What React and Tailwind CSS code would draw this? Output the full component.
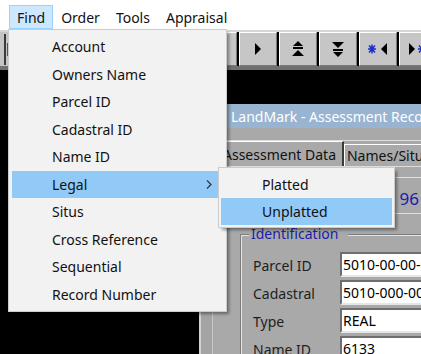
import React from "react"

const findItems = [
  "Account", "Owners Name", "Parcel ID", "Cadastral ID", "Name ID",
  "Legal", "Situs", "Cross Reference", "Sequential", "Record Number",
]

const fields = [
  { label: "Parcel ID", value: "5010-00-00-00-000-000" },
  { label: "Cadastral", value: "5010-000-00-000" },
  { label: "Type", value: "REAL" },
  { label: "Name ID", value: "6133" },
]

function ToolButton({ children }) {
  return (
    <div className="ml-[2px] w-[38px] h-[34px] shrink-0 flex items-center justify-center bg-[#c6c6c6] border border-t-white border-l-white border-b-[#7a7a7a] border-r-[#7a7a7a]">
      {children}
    </div>
  )
}

export default function App() {
  return (
    <div className="relative w-[421px] h-[354px] overflow-hidden bg-black font-['Noto_Sans',sans-serif] text-[14px] text-[#111] flex flex-col">

      {/* Menu bar */}
      <div className="h-[30px] shrink-0 bg-white flex items-start pt-[5px] pl-[9px]">
        {["Find", "Order", "Tools", "Appraisal"].map((m, i) => (
          <div key={m}
            className={`h-[24px] px-[7px] flex items-center border ${i === 0 ? "bg-[#cce8ff] border-[#99d1ff]" : "border-transparent"}`}>
            {m}
          </div>
        ))}
      </div>

      {/* Toolbar */}
      <div className="h-[40px] shrink-0 flex flex-col bg-black border-t-2 border-[#d6d6d6]">
        <div className="h-[34px] flex">
          <div className="w-[197px] shrink-0 bg-[#c4c4c4] flex items-center">
            <div className="ml-[4px] h-[31px] border-l-2 border-[#3a3a3a] flex items-center">
              <div className="ml-[1px] w-[3px] h-[13px] bg-[#3050c8]" />
            </div>
          </div>
          <ToolButton />
          <ToolButton>
            <svg width="8" height="12" viewBox="0 0 8 12"><path d="M1 0 L7 6 L1 12 Z" fill="#000" /></svg>
          </ToolButton>
          <ToolButton>
            <svg width="14" height="16" viewBox="0 0 14 16">
              <path d="M7 0 L12 5 L2 5 Z" fill="#000" />
              <rect x="2" y="6" width="10" height="2" fill="#000" />
              <path d="M7 9 L13 15 L1 15 Z" fill="#000" />
            </svg>
          </ToolButton>
          <ToolButton>
            <svg width="14" height="16" viewBox="0 0 14 16">
              <path d="M1 1 L13 1 L7 7 Z" fill="#000" />
              <rect x="2" y="8" width="10" height="2" fill="#000" />
              <path d="M2 11 L12 11 L7 16 Z" fill="#000" />
            </svg>
          </ToolButton>
          <ToolButton>
            <svg width="22" height="12" viewBox="0 0 22 12">
              <path d="M5 1.5 V10.5 M1 6 H9 M2 2.5 L8 9.5 M8 2.5 L2 9.5" stroke="#1a2cd0" strokeWidth="1.5" />
              <path d="M20 0 L14 6 L20 12 Z" fill="#000" />
            </svg>
          </ToolButton>
          <ToolButton>
            <svg width="22" height="12" viewBox="0 0 22 12">
              <path d="M2 0 L8 6 L2 12 Z" fill="#000" />
              <path d="M15 1.5 V10.5 M11 6 H19 M12 2.5 L18 9.5 M18 2.5 L12 9.5" stroke="#1a2cd0" strokeWidth="1.5" />
            </svg>
          </ToolButton>
        </div>
        <div className="h-[4px] bg-[#707070]" />
      </div>

      {/* MDI area */}
      <div className="flex-1 bg-black pt-[34px] pl-[199px]">
        <div className="w-[420px] h-full bg-[#a9a9a9] flex flex-col">
          <div className="h-[24px] shrink-0 bg-[#99b4d1] text-white pl-[32px] pt-[1px] flex items-center whitespace-nowrap">
            LandMark - Assessment Record
          </div>
          <div className="flex-1 flex">
            {/* window frame */}
            <div className="w-[14px] shrink-0 bg-[#a4a4a4] border-l-2 border-l-[#d2d2d2] border-r border-r-[#c8c8c8]" />
            <div className="flex-1 flex flex-col">
              <div className="h-[13px] shrink-0 border-b border-[#dcdcdc]" />
              {/* tabs */}
              <div className="h-[25px] shrink-0 flex whitespace-nowrap">
                <div className="ml-[3px] px-[6px] border-t border-l border-white border-r-2 border-r-[#3a3a3a] flex items-center">
                  Assessment Data
                </div>
                <div className="pl-[2px] pr-[6px] mt-[3px] border-t border-l border-white flex items-center">
                  Names/Situs
                </div>
              </div>
              {/* tab panel */}
              <div className="flex-1 border-t border-[#dcdcdc] flex flex-col">
                <div className="h-[11px] shrink-0 border-b border-[#e2e2e2]" />
                <div className="h-[36px] shrink-0 border-b border-[#e2e2e2] flex items-center pt-[7px]">
                  <div className="w-[206px] text-right text-[17px] text-[#1c1ca8]">96</div>
                </div>
                {/* Identification group */}
                <div className="relative ml-[27px] mt-[20px] flex-1 border-t border-l border-[#7c7c7c] shadow-[inset_1px_1px_0_#e4e4e4]">
                  <div className="absolute -top-[11px] left-[8px] pl-[2px] pr-[10px] bg-[#a9a9a9] text-[#1c1ca8] leading-[20px]">
                    Identification
                  </div>
                  <div className="pt-[17px] pl-[12px] flex flex-col gap-[3px]">
                    {fields.map(f => (
                      <div key={f.label} className="h-[25px] flex items-center whitespace-nowrap">
                        <div className="w-[87px] shrink-0 pt-[2px] text-[#1e1e1e]">{f.label}</div>
                        <div className="flex-1 h-full bg-white border-2 border-t-[#6e6e6e] border-l-[#6e6e6e] border-b-[#e6e6e6] border-r-[#e6e6e6] pl-[1px] flex items-center text-black">
                          {f.value}
                        </div>
                      </div>
                    ))}
                  </div>
                </div>
              </div>
            </div>
          </div>
        </div>
      </div>

      {/* Find dropdown */}
      <div className="absolute left-[8px] top-[29px] w-[219px] bg-[#f2f2f2] border border-[#cccccc] p-[3px] shadow-[3px_3px_3px_-1px_rgba(0,0,0,0.4)]">
        {findItems.map(item => (
          <div key={item}
            className={`h-[27.5px] pl-[40px] flex items-center whitespace-nowrap ${item === "Legal" ? "bg-[#91c9f7]" : ""}`}>
            <span className="flex-1">{item}</span>
            {item === "Legal" && (
              <svg width="6" height="9" viewBox="0 0 6 9" className="mr-[11px]">
                <path d="M1 0.5 L5 4.5 L1 8.5" fill="none" stroke="#333" strokeWidth="1.2" />
              </svg>
            )}
          </div>
        ))}
      </div>

      {/* Legal submenu */}
      <div className="absolute left-[218px] top-[167px] w-[177px] bg-[#f2f2f2] border border-[#cccccc] pt-[3px] pb-[2px] px-[2px] shadow-[3px_3px_3px_-1px_rgba(0,0,0,0.4)]">
        <div className="h-[27px] pl-[41px] flex items-center">Platted</div>
        <div className="h-[27px] pl-[41px] flex items-center bg-[#91c9f7]">Unplatted</div>
      </div>
    </div>
  )
}
